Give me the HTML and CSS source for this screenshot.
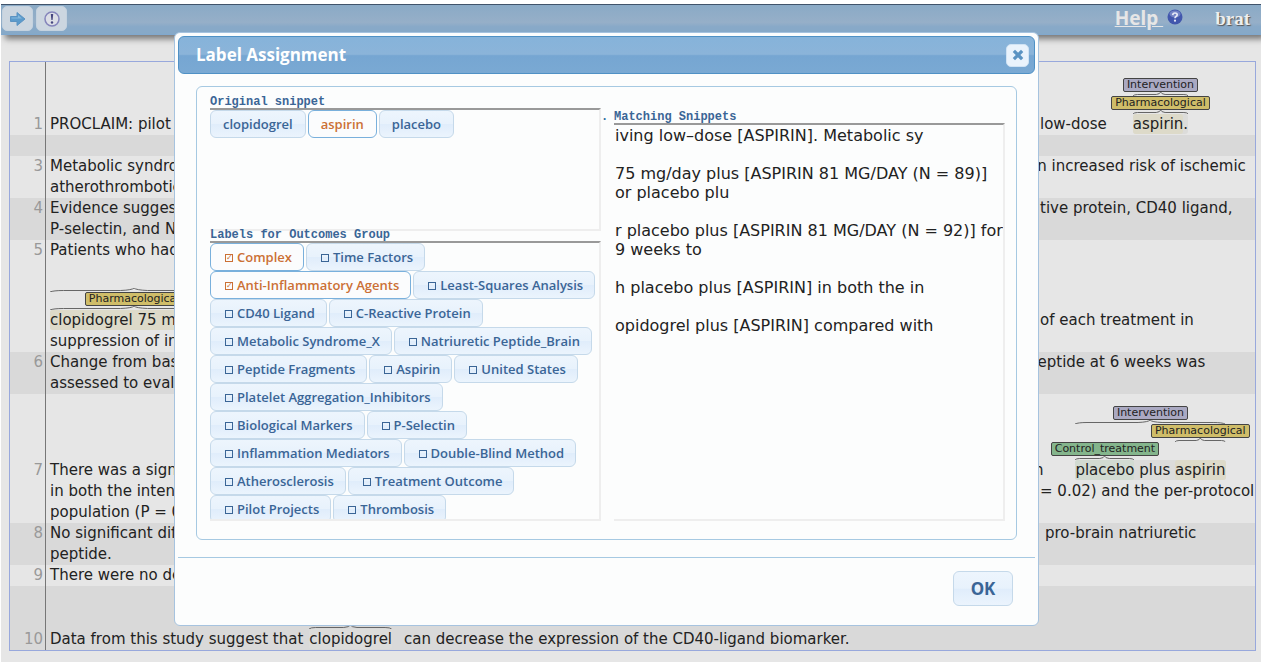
FILE: index.html
```html
<!DOCTYPE html>
<html lang="en">
<head>
<meta charset="utf-8">
<title>brat - Label Assignment</title>
<link rel="stylesheet" href="styles.css">
</head>
<body>
<svg class="defs" aria-hidden="true">
  <symbol id="brace" viewBox="0 0 100 4" preserveAspectRatio="none">
    <path d="M0 4Q2 2.500 8 2.500H42Q49 2 50 0Q51 2 58 2.500H92Q98 2.500 100 4" fill="none" stroke="#666" stroke-width="1" vector-effect="non-scaling-stroke"/>
  </symbol>
</svg>
<div class="page">
  <header class="toolbar">
    <div class="tools">
      <button class="tool" type="button" aria-label="Next document">
        <svg width="18" height="16" viewBox="0 0 18 16"><path d="M1.500 5.500H8V1.500L16 8L8 14.500V10.500H1.500Z" fill="#5c9bcc" stroke="#5b93c2" stroke-linejoin="round"/><path d="M2.500 6.500H9V4L13 7.500H2.500Z" fill="#86b9dd"/></svg>
      </button>
      <button class="tool" type="button" aria-label="Status">
        <svg width="18" height="18" viewBox="0 0 18 18"><circle cx="9" cy="9" r="7" fill="#dcdee6" stroke="#8585bb" stroke-width="1.500"/><path d="M7.800 4h2.400l-.6 6H8.400z" fill="#46467f"/><circle cx="9" cy="12.500" r="1.200" fill="#46467f"/></svg>
      </button>
    </div>
    <div class="links">
      <a class="help" href="#help">Help&nbsp;</a>
      <svg class="help-icon" width="16" height="16" viewBox="0 0 16 16"><circle cx="8" cy="8" r="7.500" fill="#4257ad"/><ellipse cx="8" cy="5" rx="5.500" ry="3.500" fill="#7484c5"/><path d="M5.700 6.100Q5.800 4 8 4Q10.200 4 10.200 5.800Q10.200 7 9 7.600Q8 8.200 8 9.200" fill="none" stroke="#e6e9f6" stroke-width="1.700"/><circle cx="8" cy="11.700" r="1.100" fill="#e6e9f6"/></svg>
      <span class="logo">brat</span>
    </div>
  </header>

  <main class="doc">
    <section class="sent intro"><span class="num">1</span><div class="lines">
      <p><span>PROCLAIM: pilot</span><span class="tail">low-dose<span class="span gap"><span class="stack"><b class="tag act">Intervention</b><svg class="brace"><use href="#brace"/></svg><b class="tag drug">Pharmacological</b><svg class="brace"><use href="#brace"/></svg></span><span class="yellow">aspirin</span>.</span></span></p>
    </div></section>
    <section class="sent"><span class="num"></span><div class="lines"><p></p></div></section>
    <section class="sent"><span class="num">3</span><div class="lines">
      <p><span>Metabolic syndrome</span><span class="tail early">an increased risk of ischemic</span></p>
      <p><span>atherothrombotic</span></p>
    </div></section>
    <section class="sent"><span class="num">4</span><div class="lines">
      <p><span>Evidence suggests</span><span class="tail">tive protein, CD40 ligand,</span></p>
      <p><span>P-selectin, and NT</span></p>
    </div></section>
    <section class="sent"><span class="num">5</span><div class="lines">
      <p><span>Patients who had</span></p>
      <p class="annotated"><span class="span wide"><span class="stack"><svg class="brace"><use href="#brace"/></svg><b class="tag drug">Pharmacological</b><svg class="brace"><use href="#brace"/></svg></span><span class="yellow">clopidogrel 75 mg/day</span></span><span class="tail">of each treatment in</span></p>
      <p><span>suppression of inf</span></p>
    </div></section>
    <section class="sent"><span class="num">6</span><div class="lines">
      <p><span>Change from base</span><span class="tail early">peptide at 6 weeks was</span></p>
      <p><span>assessed to evalua</span></p>
    </div></section>
    <section class="sent result"><span class="num">7</span><div class="lines">
      <p><span>There was a signif</span><span class="tail early">th<span class="span gap"><span class="stack level-2"><b class="tag act">Intervention</b><svg class="brace"><use href="#brace"/></svg></span><span class="span green"><span class="stack"><b class="tag ctrl">Control_treatment</b><svg class="brace"><use href="#brace"/></svg></span>placebo</span> plus <span class="span yellow"><span class="stack level-1"><b class="tag drug">Pharmacological</b><svg class="brace"><use href="#brace"/></svg></span>aspirin</span></span></span></p>
      <p><span>in both the intenti</span><span class="tail">= 0.02) and the per-protocol</span></p>
      <p><span>population (P = 0.</span></p>
    </div></section>
    <section class="sent"><span class="num">8</span><div class="lines">
      <p><span>No significant diffe</span><span class="tail late">pro-brain natriuretic</span></p>
      <p><span>peptide.</span></p>
    </div></section>
    <section class="sent"><span class="num">9</span><div class="lines">
      <p><span>There were no dea</span></p>
    </div></section>
    <section class="sent closing"><span class="num">10</span><div class="lines">
      <p><span>Data from this study suggest that<span class="span mid"><span class="stack"><b class="tag drug">Pharmacological</b><svg class="brace"><use href="#brace"/></svg></span>clopidogrel</span>can decrease the expression of the CD40-ligand biomarker.</span></p>
    </div></section>
  </main>

  <section class="dialog" role="dialog" aria-labelledby="dialog-title">
    <div class="titlebar">
      <h1 id="dialog-title">Label Assignment</h1>
      <button class="close" type="button" aria-label="Close"><svg width="12" height="12" viewBox="0 0 12 12"><path d="M3 3L9 9M9 3L3 9" stroke="#5b93c2" stroke-width="3.200" stroke-linecap="square"/></svg></button>
    </div>
    <div class="content">
      <div class="left">
        <h2>Original snippet</h2>
        <div class="panel original">
          <label class="chip"><input type="radio" name="snippet">clopidogrel</label>
          <label class="chip on"><input type="radio" name="snippet" checked>aspirin</label>
          <label class="chip"><input type="radio" name="snippet">placebo</label>
        </div>
        <h2>Labels for Outcomes Group</h2>
        <div class="panel labels">
          <div class="chips"><label class="chip on"><input type="checkbox" checked>Complex</label><label class="chip"><input type="checkbox">Time Factors</label></div>
          <div class="chips"><label class="chip on"><input type="checkbox" checked>Anti-Inflammatory Agents</label><label class="chip"><input type="checkbox">Least-Squares Analysis</label></div>
          <div class="chips"><label class="chip"><input type="checkbox">CD40 Ligand</label><label class="chip"><input type="checkbox">C-Reactive Protein</label></div>
          <div class="chips"><label class="chip"><input type="checkbox">Metabolic Syndrome_X</label><label class="chip"><input type="checkbox">Natriuretic Peptide_Brain</label></div>
          <div class="chips"><label class="chip"><input type="checkbox">Peptide Fragments</label><label class="chip"><input type="checkbox">Aspirin</label><label class="chip"><input type="checkbox">United States</label></div>
          <div class="chips"><label class="chip"><input type="checkbox">Platelet Aggregation_Inhibitors</label></div>
          <div class="chips"><label class="chip"><input type="checkbox">Biological Markers</label><label class="chip"><input type="checkbox">P-Selectin</label></div>
          <div class="chips"><label class="chip"><input type="checkbox">Inflammation Mediators</label><label class="chip"><input type="checkbox">Double-Blind Method</label></div>
          <div class="chips"><label class="chip"><input type="checkbox">Atherosclerosis</label><label class="chip"><input type="checkbox">Treatment Outcome</label></div>
          <div class="chips"><label class="chip"><input type="checkbox">Pilot Projects</label><label class="chip"><input type="checkbox">Thrombosis</label></div>
        </div>
      </div>
      <span class="dot">.</span>
      <div class="right">
        <h2>Matching Snippets</h2>
        <div class="panel matches">
          <p>iving low–dose [ASPIRIN]. Metabolic sy</p>
          <p>75 mg/day plus [ASPIRIN 81 MG/DAY (N = 89)]<br>or placebo plu</p>
          <p>r placebo plus [ASPIRIN 81 MG/DAY (N = 92)] for<br>9 weeks to</p>
          <p>h placebo plus [ASPIRIN] in both the in</p>
          <p>opidogrel plus [ASPIRIN] compared with</p>
        </div>
      </div>
    </div>
    <div class="actions"><button class="ok" type="button">OK</button></div>
  </section>
</div>
</body>
</html>
```
FILE: styles.css
```css
* { box-sizing: border-box; }
body {
  margin: 0;
  padding: 4px 5px 4px 1px;
  background: #fff;
  font-family: "DejaVu Sans", Verdana, sans-serif;
  color: #222;
}
h1, h2, p { margin: 0; }
button { font: inherit; padding: 0; }
.defs { position: absolute; width: 0; height: 0; }
.page { background: #e6e6e6; padding-bottom: 11px; overflow: hidden; }

/* Toolbar */
.toolbar {
  display: flex;
  justify-content: space-between;
  height: 31px;
  border-top: 1px solid #40536a;
  border-bottom: 1px solid #80a8ce;
  background: linear-gradient(#8aaac6 0%, #96afc8 60%, #88a9c8 75%, #86a9c8 100%);
  box-shadow: 4px 4px 6px #777;
}
.tools { display: flex; gap: 3px; padding: 1px; }
.tool {
  display: flex;
  align-items: center;
  justify-content: center;
  width: 31px;
  height: 25px;
  border: 1px solid #c4d2df;
  border-radius: 5px;
  background: #ccd6e0;
}
.links { display: flex; align-items: flex-start; padding-right: 11px; }
.help {
  color: #e6e6e6;
  font: bold 19px/27px "Noto Sans", sans-serif;
  text-decoration: underline;
}
.help-icon { margin: 4px 32px 0 4px; }
.logo {
  color: #eee;
  font: bold 19px/28px "Liberation Serif", serif;
  text-shadow: 1px 1px 1px #555;
}

/* Document */
.doc {
  margin: 26px 5px 0 8px;
  border: 1px solid #98a8dc;
  font-size: 15px;
  line-height: 21px;
  overflow: hidden;
}
.sent { display: flex; background: #e6e6e6; }
.sent:nth-child(even) { background: #d9d9d9; }
.num {
  flex: none;
  display: flex;
  align-items: flex-start;
  justify-content: flex-end;
  width: 36px;
  padding-right: 2px;
  border-right: 1px solid #777;
  color: #999;
}
.lines { flex: 1; padding-left: 4px; }
.lines p { display: flex; justify-content: space-between; height: 21px; white-space: nowrap; }
.tail { flex: none; width: 215px; }
.early { width: 227px; }
.late { width: 210px; }
.intro .lines, .intro .num { padding-top: 52px; }
.result .lines, .result .num { padding-top: 66px; }
.closing .lines, .closing .num { padding-top: 43px; }
.lines .annotated { height: 70px; padding-top: 49px; }
.span { position: relative; display: inline-block; height: 20px; border-radius: 3px; background: #dcdcda; }
.gap { margin-left: 26px; }
.result .gap { margin-left: 32px; }
.mid { margin: 0 12px 0 6px; }
.yellow { display: inline-block; height: 20px; border-radius: 3px; background: #dddac9; }
.green { background: #d2dbd2; }

/* Annotation labels float above the words they mark */
.stack {
  position: absolute;
  left: 0;
  right: 0;
  bottom: 100%;
  display: flex;
  flex-direction: column;
  align-items: center;
}
.level-1 { padding-bottom: 18px; }
.level-2 { padding-bottom: 36px; }
.brace { display: block; width: 100%; height: 4px; }
.tag {
  flex: none;
  height: 14px;
  padding: 0 3px;
  border: 1px solid #444;
  border-radius: 2px;
  font-size: 11px;
  font-weight: normal;
  line-height: 12px;
}
.act { background: #aaa9c2; }
.drug { background: #cfbd69; }
.ctrl { background: #84b58c; }

/* Dialog */
.dialog {
  position: absolute;
  top: 32px;
  left: 174px;
  right: 227px;
  padding: 3px;
  border: 1px solid #a6c3df;
  border-radius: 6px;
  background: #fcfdfd;
}
.titlebar {
  display: flex;
  align-items: center;
  justify-content: space-between;
  height: 38px;
  padding: 0 5px 0 17px;
  border: 1px solid #4f91c5;
  border-radius: 6px;
  background: linear-gradient(#86b3da 0, #8bb4d9 48%, #76a6d2 52%, #7aa9d3 100%);
}
.titlebar h1 { color: #fff; font: bold 17px/24px "Open Sans", sans-serif; }
.close {
  display: flex;
  align-items: center;
  justify-content: center;
  width: 23px;
  height: 23px;
  border: 1px solid #d0e3f4;
  border-radius: 5px;
  background: #eaf3fc;
}
.content {
  display: flex;
  margin: 12px 18px 17px;
  padding: 9px 11px 18px 13px;
  border: 1px solid #a6c9e2;
  border-radius: 6px;
}
.left, .right { flex: 1; min-width: 0; }
.right { padding-top: 15px; }
.dot {
  flex: none;
  width: 13px;
  padding-top: 15px;
  color: #2e6e9e;
  font: bold 12px/12px "Liberation Mono", monospace;
}
h2 { color: #3a6596; font: bold 12px/12px "Liberation Mono", "Courier New", monospace; }
.panel {
  border-top: 2px solid #999;
  border-right: 2px solid #eee;
  border-bottom: 2px solid #eee;
  overflow: hidden;
}
.original { display: flex; align-items: flex-start; gap: 2px; height: 123px; margin-bottom: -2px; }
.labels { height: 280px; }
.matches {
  height: 398px;
  font: 16px/19px "DejaVu Sans", sans-serif;
  color: #222;
  white-space: nowrap;
}
.matches p { padding: 1px 0 18px 1px; }
.chips { display: flex; gap: 2px; }
.chip {
  display: flex;
  align-items: center;
  height: 28px;
  padding: 0 11px 0 13px;
  border: 1px solid #c5d9ea;
  border-radius: 6px;
  background: linear-gradient(#edf5fd 0, #e8f2fc 49%, #e0edfb 52%, #ebf4fd 100%);
  color: #3a6596;
  font: 600 13px/26px "Open Sans", sans-serif;
  white-space: nowrap;
}
.chip.on { border-color: #79b0dc; background: #fbfcfd; color: #cb7035; }
.original .chip { padding: 0 12px; }
.chip input { appearance: none; margin: 0; }
.chip input[type="radio"] { width: 0; height: 0; }
.chip input[type="checkbox"] {
  display: grid;
  place-items: center;
  width: 8px;
  height: 8px;
  margin: 1px 4px 0 1px;
  border: 1px solid currentColor;
  color: inherit;
}
.chip input[type="checkbox"]:checked::after { content: "✓"; font: bold 8px/6px "DejaVu Sans", sans-serif; }
.actions {
  display: flex;
  justify-content: flex-end;
  padding: 13px 22px 16px;
  border-top: 1px solid #a6c9e2;
}
.ok {
  width: 60px;
  height: 35px;
  border: 1px solid #c5d9ea;
  border-radius: 6px;
  background: linear-gradient(#edf5fd 0, #e8f2fc 49%, #e0edfb 52%, #ebf4fd 100%);
  color: #3a6596;
  font: bold 17px/24px "Noto Sans", sans-serif;
}
```
